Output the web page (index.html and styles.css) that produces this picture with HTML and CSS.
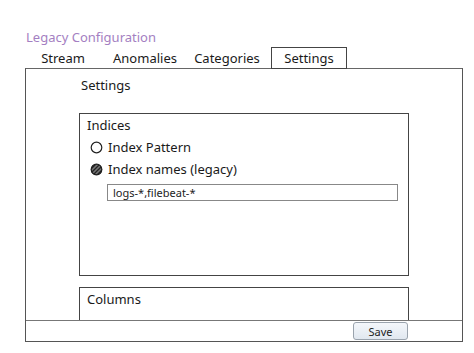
FILE: index.html
```html
<!DOCTYPE html>
<html lang="en">
<head>
    <meta charset="UTF-8">
    <meta name="viewport" content="width=device-width, initial-scale=1.0">
    <title>Legacy Configuration</title>
    <link rel="stylesheet" href="styles.css">
</head>
<body>
    <div class="app">
        <div class="title">Legacy Configuration</div>
        <div class="tabs">
            <div class="tab">Stream</div>
            <div class="tab">Anomalies</div>
            <div class="tab">Categories</div>
            <div class="tab active">Settings</div>
        </div>
        <div class="panel">
            <div class="panel-body">
                <div class="heading">Settings</div>
                <div class="group indices">
                    <div class="group-title">Indices</div>
                    <div class="radio">
                        <svg class="radio-icon" width="13" height="13" viewBox="0 0 13 13">
                            <circle cx="6.5" cy="6.5" r="5.3" fill="none" stroke="#222" stroke-width="1.2"/>
                        </svg>
                        Index Pattern
                    </div>
                    <div class="radio">
                        <svg class="radio-icon" width="13" height="13" viewBox="0 0 13 13">
                            <defs>
                                <clipPath id="dot"><circle cx="6.5" cy="6.5" r="5.6"/></clipPath>
                            </defs>
                            <circle cx="6.5" cy="6.5" r="5.6" fill="#777"/>
                            <g clip-path="url(#dot)" stroke="#222" stroke-width="1.3">
                                <line x1="-2" y1="6" x2="6" y2="-2"/>
                                <line x1="-2" y1="9" x2="9" y2="-2"/>
                                <line x1="0" y1="11" x2="11" y2="0"/>
                                <line x1="2" y1="13" x2="13" y2="2"/>
                                <line x1="4" y1="15" x2="15" y2="4"/>
                                <line x1="7" y1="15" x2="15" y2="7"/>
                            </g>
                            <circle cx="6.5" cy="6.5" r="5.3" fill="none" stroke="#222" stroke-width="1.2"/>
                        </svg>
                        Index names (legacy)
                    </div>
                    <input class="text-input" type="text" value="logs-*,filebeat-*">
                </div>
                <div class="group columns">
                    <div class="group-title">Columns</div>
                </div>
            </div>
            <div class="panel-footer">
                <button class="btn">Save</button>
            </div>
        </div>
    </div>
</body>
</html>
```

FILE: styles.css
```css
body {
    margin: 0;
    background-color: #fff;
    font-family: "Noto Sans", "Open Sans", sans-serif;
    color: #1a1a1a;
}
.app {
    width: 438px;
    margin-left: 25px;
    padding-top: 28px;
}
.title {
    font-size: 13px;
    line-height: 18px;
    color: #a47fc2;
    padding-left: 1px;
}
.tabs {
    display: flex;
    gap: 6px;
    margin-top: 1px;
    margin-bottom: -1px;
}
.tab {
    width: 76px;
    height: 22px;
    box-sizing: border-box;
    line-height: 20px;
    font-size: 13px;
    text-align: center;
    border: 1px solid transparent;
}
.tab.active {
    border-color: #444;
    background-color: #fff;
    position: relative;
    z-index: 1;
}
.panel {
    border: 1px solid #555;
    border-top-color: #666;
}
.panel-body {
    height: 251px;
    overflow: hidden;
    padding: 5px 0 0 53px;
    box-sizing: border-box;
}
.heading {
    font-size: 13px;
    line-height: 22px;
    padding-left: 2px;
    margin-bottom: 17px;
}
.group {
    width: 330px;
    box-sizing: border-box;
    border: 1px solid #444;
    padding: 0 7px;
    font-size: 13px;
    line-height: 22px;
}
.indices {
    height: 163px;
}
.columns {
    height: 60px;
    margin-top: 11px;
}
.radio {
    display: flex;
    align-items: center;
    gap: 5px;
    padding-left: 3px;
}
.radio-icon {
    flex: none;
}
.text-input {
    display: block;
    margin: 4px 0 0 20px;
    width: 291px;
    height: 17px;
    box-sizing: border-box;
    border: 1px solid #888;
    padding: 0 5px;
    font-family: "Noto Sans", "Open Sans", sans-serif;
    font-size: 11px;
    color: #222;
    outline: none;
}
.panel-footer {
    border-top: 1px solid #777;
    height: 21px;
    display: flex;
    justify-content: flex-end;
    align-items: flex-start;
    padding: 1px 54px 0 0;
    box-sizing: border-box;
}
.btn {
    width: 55px;
    height: 18px;
    padding: 0;
    border: 1px solid #9aa3ad;
    border-radius: 3px;
    background: linear-gradient(#f4f7fb, #e1e8f0);
    font-family: "Noto Sans", "Open Sans", sans-serif;
    font-size: 11px;
    color: #222;
    cursor: pointer;
}
```
